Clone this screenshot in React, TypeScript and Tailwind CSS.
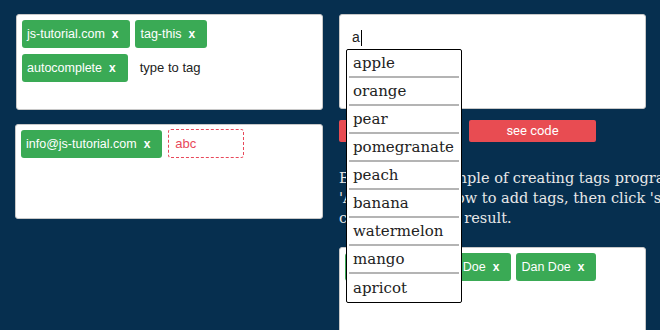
import React from 'react';

const fruits = ['apple', 'orange', 'pear', 'pomegranate', 'peach', 'banana', 'watermelon', 'mango', 'apricot'];

function Tag({ label }: { label: string }) {
  return (
    <span className="inline-flex items-center h-[28px] pl-[5px] pr-[12px] bg-[#3aaa55] rounded-[3px] text-white text-[12.5px] font-['Liberation_Sans',sans-serif] whitespace-nowrap">
      {label}
      <span className="ml-[7px] font-bold text-[12px]">x</span>
    </span>
  );
}

export default function App() {
  return (
    <div className="w-[660px] h-[330px] overflow-hidden bg-[#062f4f] flex items-start gap-[16px] pl-[16px] pt-[14px]">
      {/* left column */}
      <div className="w-[307px] shrink-0 flex flex-col gap-[14px]">
        <div className="h-[96px] shrink-0 bg-white border border-[#c8c8c8] rounded-[3px] p-[5px] flex flex-wrap content-start gap-x-[5px] gap-y-[6px]">
          <Tag label="js-tutorial.com" />
          <Tag label="tag-this" />
          <Tag label="autocomplete" />
          <span className="flex items-center h-[28px] pl-[7px] text-[13px] text-[#222] font-['Liberation_Sans',sans-serif]">type to tag</span>
        </div>
        <div className="h-[95px] shrink-0 bg-white border border-[#c8c8c8] rounded-[3px] p-[5px] -ml-[1px] flex flex-wrap content-start gap-x-[6px]">
          <Tag label="info@js-tutorial.com" />
          <span className="flex items-center h-[29px] w-[76px] -mt-[1px] pl-[6px] border border-dashed border-[#e8485a] rounded-[3px] text-[13px] text-[#e8485a] font-['Liberation_Sans',sans-serif]">abc</span>
        </div>
      </div>

      {/* right column */}
      <div className="relative w-[307px] shrink-0 flex flex-col">
        <div className="h-[95px] shrink-0 bg-white border border-[#c8c8c8] rounded-[3px] px-[12px] pt-[12px]">
          <div className="flex items-center text-[14px] text-[#222] font-['Liberation_Sans',sans-serif]">
            a<span className="w-[1px] h-[16px] bg-black ml-[1px]" />
          </div>
        </div>
        <div className="flex shrink-0 gap-[7px] mt-[11px]">
          <button className="w-[123px] h-[22px] bg-[#e84c52] rounded-[2px] text-white text-[13px] font-['Roboto',sans-serif]">add</button>
          <button className="w-[127px] h-[22px] bg-[#e84c52] rounded-[2px] text-white text-[13px] font-['Roboto',sans-serif]">see code</button>
        </div>
        <div className="mt-[26px] shrink-0 w-[322px] overflow-hidden text-[14.5px] leading-[20px] text-[#e8e8e8] font-['DejaVu_Serif',serif] whitespace-nowrap">
          <div>Below is an example of creating tags programmatically.</div>
          <div>'Add' button below to add tags, then click 'see code'</div>
          <div>code to view the result.</div>
        </div>
        <div className="mt-[19px] h-[100px] shrink-0 bg-white border border-[#c8c8c8] rounded-[3px] p-[5px] flex gap-[5px]">
          <Tag label="Jon Doe" />
          <Tag label="Jane Doe" />
          <Tag label="Dan Doe" />
        </div>

        {/* autocomplete dropdown */}
        <div className="absolute left-[7px] top-[35px] w-[116px] bg-white border border-black rounded-[2px] px-[2px] font-['DejaVu_Serif',serif] text-[15px] text-[#222]">
          {fruits.map((f, i) => (
            <div
              key={f}
              className={i < fruits.length - 1 ? 'h-[28px] flex items-center pl-[4px] border-b-2 border-[#b4b4b4]' : 'h-[28px] flex items-center pl-[4px]'}
            >
              {f}
            </div>
          ))}
        </div>
      </div>
    </div>
  );
}
